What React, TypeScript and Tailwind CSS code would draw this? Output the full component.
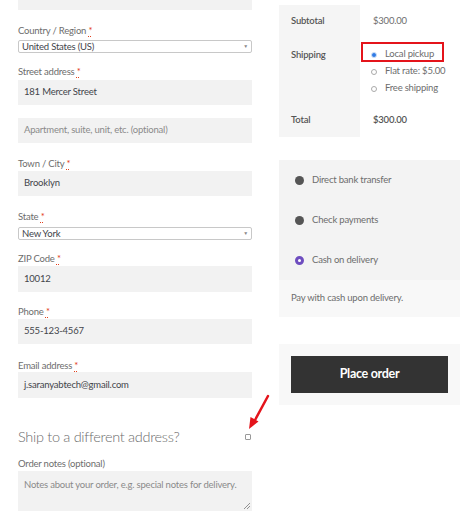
import React from "react";

const font = { fontFamily: "Lato, 'Open Sans', sans-serif" };

function Req() {
  return <span className="text-[#e2401c] underline decoration-dotted underline-offset-2">*</span>;
}

function Label({ text, req = true, className = "" }: { text: string; req?: boolean; className?: string }) {
  return (
    <div className={`h-[12px] text-[9.5px] leading-[12px] tracking-[-0.2px] text-[#6d6d6d] ${className}`}>
      {text} {req && <Req />}
    </div>
  );
}

function Input({ value, placeholder, className = "" }: { value?: string; placeholder?: string; className?: string }) {
  return (
    <div className={`flex h-[25px] items-center whitespace-nowrap bg-[#f2f2f2] px-[6px] text-[9.5px] tracking-[-0.2px] ${className}`}>
      {value ? <span className="text-[#43454b]">{value}</span> : <span className="text-[#8a8a8a]">{placeholder}</span>}
    </div>
  );
}

function Select({ value, className = "" }: { value: string; className?: string }) {
  return (
    <div className={`flex h-[13px] items-center justify-between rounded-[2px] border border-[#c8c8c8] bg-white pl-[3px] pr-[3px] text-[9.5px] leading-none tracking-[-0.2px] text-[#43454b] ${className}`}>
      <span>{value}</span>
      <span className="text-[5px] text-[#888]">▼</span>
    </div>
  );
}

function PayRadio({ label, checked = false }: { label: string; checked?: boolean }) {
  return (
    <div className="flex h-[40px] items-center pl-[16px] text-[9.5px] tracking-[-0.2px] text-[#6d6d6d]">
      {checked ? (
        <span className="mr-[8px] h-[9px] w-[9px] rounded-full border-[3px] border-[#6e4dbf] bg-white" />
      ) : (
        <span className="mr-[8px] h-[9px] w-[9px] rounded-full bg-[#555]" />
      )}
      {label}
    </div>
  );
}

function ShipRadio({ label, checked = false }: { label: string; checked?: boolean }) {
  return (
    <div className="flex h-[17px] items-center text-[9.5px] tracking-[-0.2px] text-[#6d6d6d]">
      {checked ? (
        <span className="mr-[8px] h-[6px] w-[6px] rounded-full border border-[#cfe0f5] bg-[#2f7ae5]" />
      ) : (
        <span className="mr-[8px] h-[6px] w-[6px] rounded-full border border-[#aaa] bg-white" />
      )}
      {label}
    </div>
  );
}

export default function App() {
  return (
    <div className="relative flex h-[532px] w-[474px] overflow-hidden bg-white" style={font}>
      {/* billing form */}
      <div className="ml-[18px] flex w-[234px] flex-col">
        <div className="h-[10px] bg-[#f2f2f2]" />
        <Label text="Country / Region" className="mt-[15px]" />
        <Select value="United States (US)" className="mt-[3px]" />
        <Label text="Street address" className="mt-[13px]" />
        <Input value="181 Mercer Street" className="mt-[2px]" />
        <Input placeholder="Apartment, suite, unit, etc. (optional)" className="mt-[13px]" />
        <Label text="Town / City" className="mt-[15px]" />
        <Input value="Brooklyn" className="mt-[1px]" />
        <Label text="State" className="mt-[15px]" />
        <Select value="New York" className="mt-[4px]" />
        <Label text="ZIP Code" className="mt-[13px]" />
        <Input value="10012" className="mt-[1px] h-[26px]" />
        <Label text="Phone" className="mt-[14px]" />
        <Input value="555-123-4567" className="mt-[1px]" />
        <Label text="Email address" className="mt-[16px]" />
        <Input value="j.saranyabtech@gmail.com" className="h-[26px]" />
        <div className="mt-[29px] flex h-[20px] items-center justify-between">
          <span className="text-[14.5px] font-light tracking-[-0.3px] text-[#6d6d6d]">Ship to a different address?</span>
          <span className="mr-[1px] h-[6px] w-[6px] rounded-[1px] border border-[#999] bg-white" />
        </div>
        <Label text="Order notes (optional)" req={false} className="mt-[11px]" />
        <div className="relative mt-[1px] h-[40px] whitespace-nowrap bg-[#f2f2f2] px-[6px] pt-[7px] text-[9.5px] tracking-[-0.2px] text-[#8a8a8a]">
          Notes about your order, e.g. special notes for delivery.
          <svg className="absolute bottom-[2px] right-[2px]" width="6" height="6" viewBox="0 0 6 6">
            <path d="M6 0 0 6M6 3 3 6" stroke="#777" strokeWidth="0.8" />
          </svg>
        </div>
      </div>

      {/* order review */}
      <div className="ml-[27px] flex w-[181px] flex-col">
        <div className="relative mt-[5px] flex flex-col text-[9.5px] tracking-[-0.2px]">
          <div className="flex h-[33px]">
            <div className="flex w-[81px] items-center bg-[#f5f5f5] pl-[12px] font-semibold text-[#555]">Subtotal</div>
            <div className="flex items-center pl-[13px] text-[#6d6d6d]">$300.00</div>
          </div>
          <div className="flex h-[66px]">
            <div className="w-[81px] bg-[#f5f5f5] pl-[12px] pt-[11px] font-semibold leading-[12px] text-[#555]">Shipping</div>
            <div className="flex flex-col pl-[11px] pt-[8px]">
              <ShipRadio label="Local pickup" checked />
              <ShipRadio label="Flat rate: $5.00" />
              <ShipRadio label="Free shipping" />
            </div>
          </div>
          <div className="flex h-[33px]">
            <div className="flex w-[81px] items-center bg-[#f5f5f5] pl-[12px] font-semibold text-[#555]">Total</div>
            <div className="flex items-center pl-[13px] font-semibold text-[#555]">$300.00</div>
          </div>
          <div className="absolute left-[82px] top-[37px] h-[20px] w-[83px] border-2 border-[#e4141b]" />
        </div>

        <div className="mt-[23px] flex flex-col">
          <div className="bg-[#f3f3f3]">
            <PayRadio label="Direct bank transfer" />
            <PayRadio label="Check payments" />
            <PayRadio label="Cash on delivery" checked />
          </div>
          <div className="flex h-[37px] items-center bg-[#f8f8f8] pl-[12px] text-[9.5px] tracking-[-0.2px] text-[#6d6d6d]">
            Pay with cash upon delivery.
          </div>
        </div>

        <div className="mt-[27px] bg-[#f8f8f8] p-[12px]">
          <div className="flex h-[37px] items-center justify-center bg-[#333333] text-[12.5px] font-bold tracking-[-0.3px] text-white">
            Place order
          </div>
        </div>
      </div>

      {/* annotation arrow */}
      <svg className="absolute left-[244px] top-[392px]" width="30" height="42" viewBox="0 0 30 42">
        <path d="M24 4 L10 30" stroke="#e4141b" strokeWidth="2.5" strokeLinecap="round" />
        <path d="M5 37 L6.5 25 L14.5 29.5 Z" fill="#e4141b" />
      </svg>
    </div>
  );
}
